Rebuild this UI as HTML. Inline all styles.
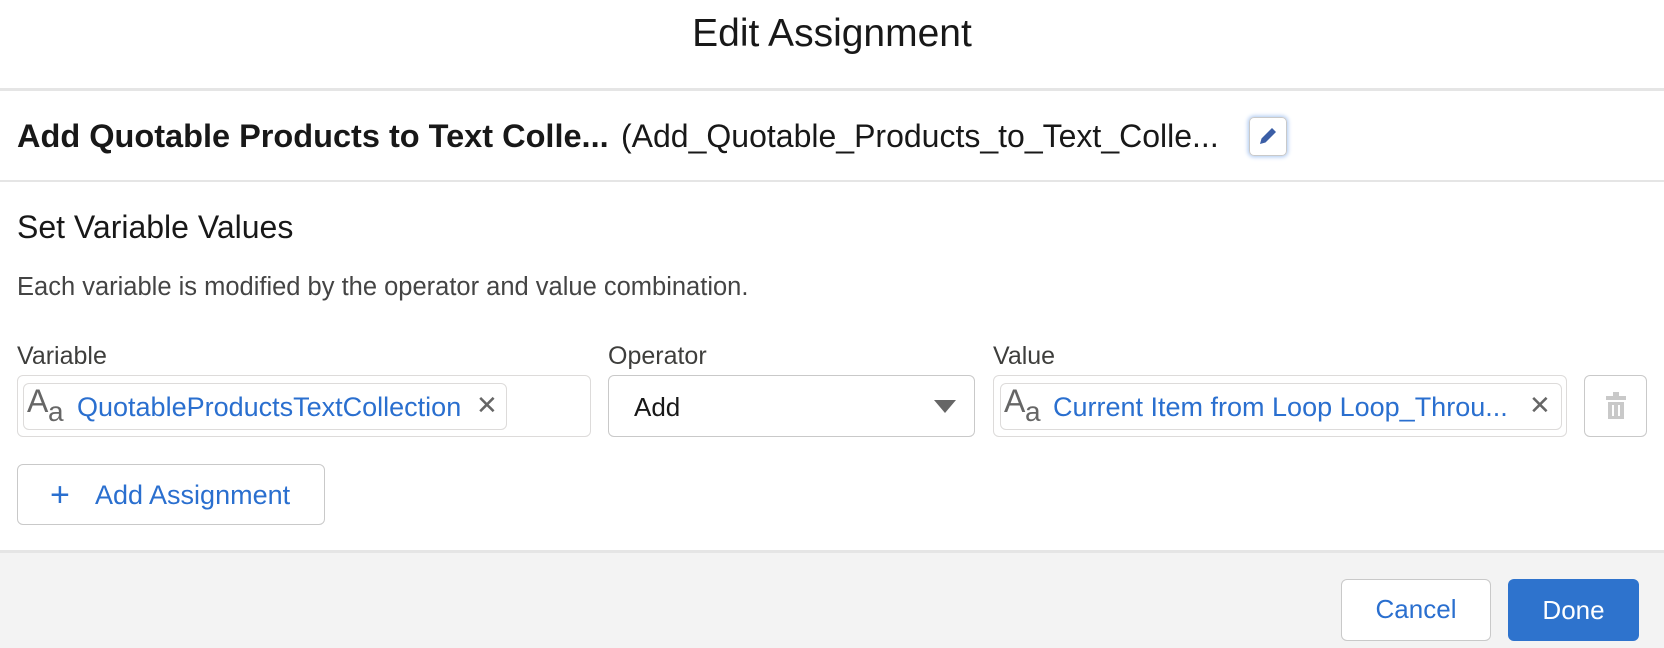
<!DOCTYPE html>
<html><head><meta charset="utf-8"><style>
*{box-sizing:border-box;margin:0;padding:0}
body{width:1664px;height:648px;background:#fff;font-family:"Liberation Sans",Arial,sans-serif;color:#181818;position:relative;overflow:hidden}
.abs{position:absolute;white-space:nowrap}
.title{left:0;width:1664px;top:10px;text-align:center;font-size:39px;line-height:48px;color:#181818}
.hr{left:0;width:1664px;background:#e5e5e5}
.lbl{font-size:25px;line-height:30px;color:#3e3e3c}
.box{border:1.5px solid #dddbda;border-radius:6px;background:#fff}
.pill{border:1.5px solid #dddbda;border-radius:6px;background:#fff}
.blue{color:#2a6fcf}
.aa{font-size:32px;color:#666}
</style></head><body>
<div class="abs title">Edit Assignment</div>
<div class="abs hr" style="top:88px;height:3px"></div>
<div class="abs" style="left:17px;top:116px;font-size:32.5px;font-weight:bold;line-height:40px">Add Quotable Products to Text Colle...</div>
<div class="abs" style="left:621px;top:116px;font-size:32px;line-height:40px">(Add_Quotable_Products_to_Text_Colle...</div>
<div class="abs" style="left:1249px;top:117px;width:38px;height:39px;border:1.5px solid #c9c9c9;border-radius:5px;box-shadow:0 0 4px 1px #a9c6f0">
<svg width="36" height="36" viewBox="0 0 36 36" style="position:absolute;left:0;top:0"><path d="M10 26 L11.5 20.5 L22 10 L26 14 L15.5 24.5 Z" fill="#3b5ea6"/></svg></div>
<div class="abs hr" style="top:180px;height:2px"></div>
<div class="abs" style="left:17px;top:207px;font-size:32px;line-height:40px">Set Variable Values</div>
<div class="abs" style="left:17px;top:272px;font-size:25.5px;line-height:30px;color:#444">Each variable is modified by the operator and value combination.</div>
<div class="abs lbl" style="left:17px;top:341px">Variable</div>
<div class="abs lbl" style="left:608px;top:341px">Operator</div>
<div class="abs lbl" style="left:993px;top:341px">Value</div>
<div class="abs box" style="left:17px;top:375px;width:574px;height:62px"></div>
<div class="abs pill" style="left:23px;top:383px;width:484px;height:47px"></div>
<div class="abs aa" style="left:27px;top:383px">A</div><div class="abs" style="left:48px;top:396px;font-size:28px;color:#666">a</div>
<div class="abs blue" style="left:77px;top:391px;font-size:27px;line-height:32px">QuotableProductsTextCollection</div>
<div class="abs" style="left:476px;top:390px;font-size:26px;color:#666">✕</div>
<div class="abs box" style="left:608px;top:375px;width:367px;height:62px;border-color:#c9c9c9"></div>
<div class="abs" style="left:634px;top:391px;font-size:26px;line-height:32px">Add</div>
<svg class="abs" style="left:934px;top:400px" width="22" height="14"><path d="M0 0 H22 L11 13 Z" fill="#666"/></svg>
<div class="abs box" style="left:993px;top:375px;width:574px;height:62px"></div>
<div class="abs pill" style="left:1000px;top:383px;width:562px;height:47px"></div>
<div class="abs aa" style="left:1004px;top:383px">A</div><div class="abs" style="left:1025px;top:396px;font-size:28px;color:#666">a</div>
<div class="abs blue" style="left:1053px;top:391px;font-size:27px;line-height:32px">Current Item from Loop Loop_Throu...</div>
<div class="abs" style="left:1529px;top:390px;font-size:26px;color:#666">✕</div>
<div class="abs box" style="left:1584px;top:375px;width:63px;height:62px;border-color:#c9c9c9"></div>
<svg class="abs" style="left:1604px;top:392px" width="24" height="28"><rect x="9" y="0" width="6" height="4" fill="#c9c9c9"/><rect x="2" y="4" width="20" height="4" fill="#c9c9c9"/><path d="M4 10 H20 V27 H4 Z" fill="#c9c9c9"/><rect x="8" y="13" width="2" height="11" fill="#fff"/><rect x="14" y="13" width="2" height="11" fill="#fff"/></svg>
<div class="abs box" style="left:17px;top:464px;width:308px;height:61px;border-color:#c9c9c9"></div>
<div class="abs blue" style="left:50px;top:479px;font-size:34px;line-height:32px">+</div>
<div class="abs blue" style="left:95px;top:479px;font-size:27px;line-height:32px">Add Assignment</div>
<div class="abs" style="left:0;top:550px;width:1664px;height:98px;background:#f3f3f3;border-top:3px solid #e5e5e5"></div>
<div class="abs" style="left:1341px;top:579px;width:150px;height:62px;border:1.5px solid #c9c9c9;border-radius:6px;background:#fff;text-align:center;line-height:59px;font-size:26px"><span class="blue">Cancel</span></div>
<div class="abs" style="left:1508px;top:579px;width:131px;height:62px;border-radius:6px;background:#2e73cd;text-align:center;line-height:62px;font-size:26px;color:#fff">Done</div>
</body></html>
